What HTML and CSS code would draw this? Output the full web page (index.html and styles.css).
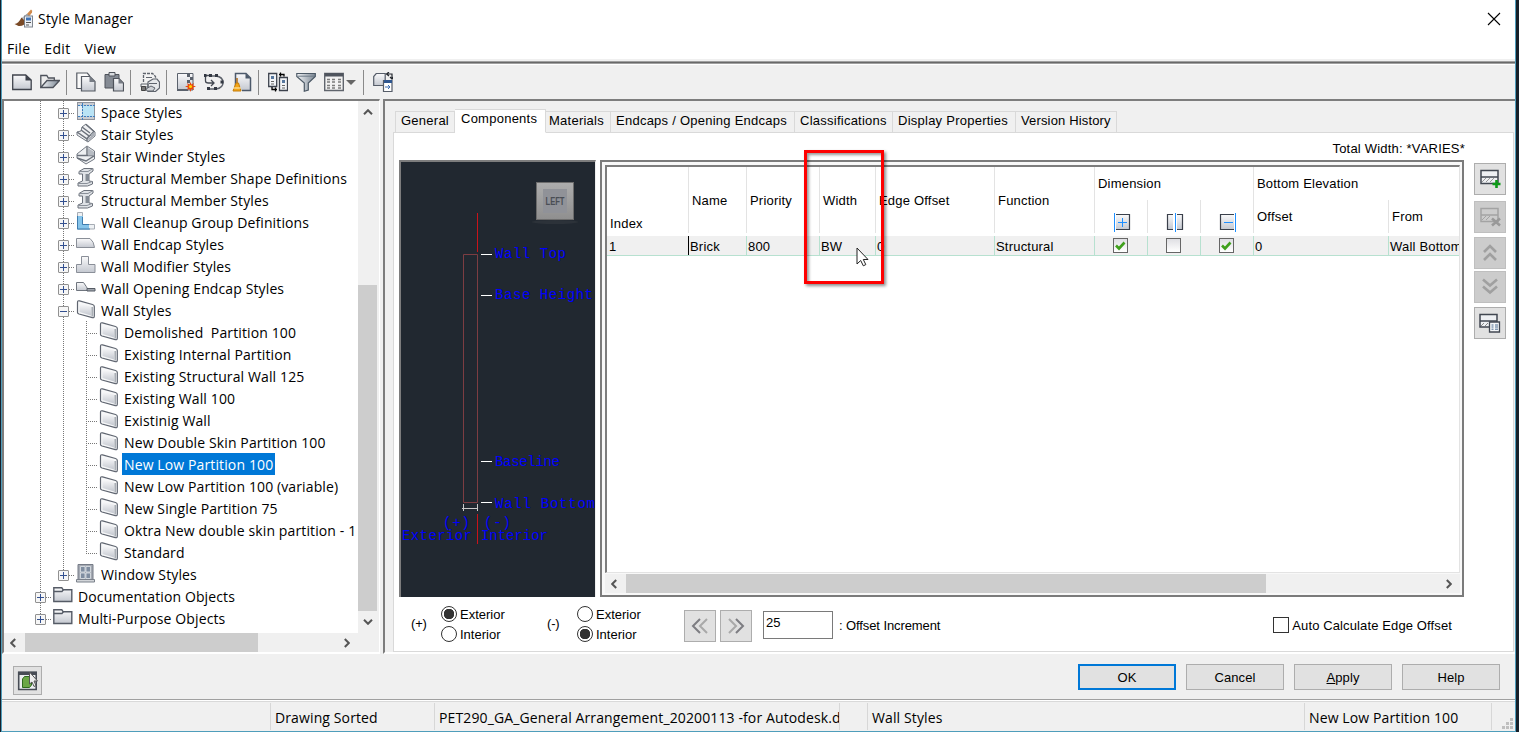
FILE: index.html
```html
<!DOCTYPE html>
<html lang="en">
<head>
    <meta charset="UTF-8">
    <title>Style Manager</title>
    <link rel="stylesheet" href="styles.css">
</head>
<body>
    <!-- Shared icons -->
    <svg class="defs" width="0" height="0">
        <defs>
            <linearGradient id="metal" x1="0" y1="0" x2="0" y2="1">
                <stop offset="0" stop-color="#fafafb"/>
                <stop offset="1" stop-color="#c4c8d0"/>
            </linearGradient>
            <linearGradient id="steel" x1="0" y1="0" x2="1" y2="0">
                <stop offset="0" stop-color="#f4f6f8"/>
                <stop offset="1" stop-color="#7b8794"/>
            </linearGradient>
        </defs>
        <symbol id="i-space" viewBox="0 0 20 20">
            <path d="M1 1h18v18H1z" fill="#c9ccd2"/>
            <path d="M1 5h5v10H1z" fill="#e6f0f7"/>
            <path d="M7 5h12v10H7z" fill="#b9e3f5"/>
            <path d="M1.500 1v18M18.500 1v18M1 1.500h18M1 18.500h18" stroke="#8f939c"/>
            <path d="M6.500 2v17M2 4.500h17M2 15.500h17" stroke="#3d7fc0" stroke-dasharray="2 1"/>
        </symbol>
        <symbol id="i-stair" viewBox="0 0 20 20">
            <path d="M1 9l4-1 1-4 4-3 9 8v4l-7 6L1 12z" fill="#f0f1f3" stroke="#737983"/>
            <path d="M1 9l10 7v2M5 7l8 6-2 3M6 4l8 6M10 1.500l8 7-3 3-2 2" stroke="#6b717b" stroke-width="1.500" fill="none"/>
            <path d="M12 18l6-5V9l-3 2.500v2l-2.500 1.500z" fill="#a9aeb6"/>
        </symbol>
        <symbol id="i-winder" viewBox="0 0 20 20">
            <path d="M1 9l10-8 7.500 5v8L10 19 1 13z" fill="#eef0f2" stroke="#737983"/>
            <path d="M1 10.500h17M1 13l9 3 8-5M11 2v8" stroke="#6b717b" fill="none" stroke-width="1.400"/>
            <path d="M12 3l6 4v3.500h-6z" fill="#b7bcc3"/>
        </symbol>
        <symbol id="i-beam" viewBox="0 0 20 20">
            <path d="M3 4.500L8 1.500h9V4l-4 3v7l3.500.500V17l-5 2H2v-3l4.500-2V7H3z" fill="#dfe2e6" stroke="#6b717b"/>
            <path d="M3 4.500h9l5-3M2 16.500h9l5-2M10 7v7" stroke="#8a9099" fill="none"/>
            <path d="M10 7h3v7h-3z" fill="#858c95"/>
        </symbol>
        <symbol id="i-cleanup" viewBox="0 0 20 20">
            <path d="M1.500 1.500h5v12h12v4.500h-17z" fill="#eef1f4" stroke="#a7adb5"/>
            <path d="M1 5h6v8h6v5.500H1z" fill="#86c4ea"/>
            <path d="M1.500 5v13H14M6.500 6v7.500H13" stroke="#3f7cae" fill="none"/>
        </symbol>
        <symbol id="i-endcap" viewBox="0 0 20 20">
            <path d="M.500 14.500v-9H14q4 3 4.500 9z" fill="url(#metal)" stroke="#8a8f98"/>
        </symbol>
        <symbol id="i-modifier" viewBox="0 0 20 20">
            <path d="M.500 17.500v-8h5v-8h7v8h6.500v8z" fill="url(#metal)" stroke="#8a8f98"/>
        </symbol>
        <symbol id="i-opening" viewBox="0 0 20 20">
            <path d="M.500 13.500v-8h7q3 4 5 8z" fill="url(#metal)" stroke="#6f757e"/>
            <path d="M11 11.500h8v2.500h-8z" fill="#a0a5ad" stroke="#555b64"/>
        </symbol>
        <symbol id="i-wall" viewBox="0 0 20 20">
            <path d="M1.500 3.500q0-2.200 2-1.600L16.500 5.500q1.800.500 1.800 2V17q0 2.200-2 1.600L3 15q-1.500-.500-1.500-1.500z" fill="#f6f7f8" stroke="#5f6570" stroke-width="1.200"/>
            <path d="M3.500 4.500L15 7.500v9L3.500 13z" fill="url(#metal)"/>
            <path d="M16.200 8v9.500" stroke="#a9aeb5" stroke-width="1.600"/>
        </symbol>
        <symbol id="i-window" viewBox="0 0 20 20">
            <path d="M2 16.500V1.500h15v15z" fill="#a4a9b2" stroke="#757b86"/>
            <path d="M4.500 3.500H9V9H4.500zM10 3.500h4.500V9H10zM4.500 10H9v5.500H4.500zM10 10h4.500v5.500H10z" fill="#7f8da0" stroke="#dfe4ea" stroke-width=".8"/>
            <path d="M.500 16.500h18V19H.500z" fill="#d2d5d9" stroke="#7b818b"/>
        </symbol>
        <symbol id="i-folder" viewBox="0 0 20 20">
            <path d="M.800 16.500V2.800h8l1.500 2h8.500v11.700z" fill="url(#metal)" stroke="#555b66" stroke-width="1.400"/>
            <path d="M1 6.500h8l1.500-2" stroke="#555b66" stroke-width="1.300" fill="none"/>
        </symbol>
    </svg>

    <div class="window">
        <div class="titlebar">
            <svg class="app-icon" viewBox="0 0 20 20" width="20" height="20">
                <path d="M12 6l5-5.500q2 1 1 3L14 9z" fill="#d08a4c"/>
                <path d="M7 10l6-5 3 3-4 6z" fill="#b9bec5" stroke="#8b9097" stroke-width=".5"/>
                <path d="M.500 15q4-.500 7-6.500l4 4q-1 5-7 4.500-2-1-4-2z" fill="#7a4a26"/>
                <rect x="10.500" y="7" width="8" height="11" fill="#eef1f5" stroke="#7e848d"/>
                <path d="M12 8.500h5v3h-5z" fill="#3f73b5"/>
                <path d="M12 13.500h5M12 16h3" stroke="#555"/>
            </svg>
            <span class="title">Style Manager</span>
            <svg class="close" viewBox="0 0 14 14" width="14" height="14"><path d="M1 1l12 12M13 1L1 13" stroke="#000" stroke-width="1.100"/></svg>
        </div>
        <div class="menubar">
            <span>File</span><span>Edit</span><span>View</span>
        </div>
        <div class="rule"></div>

        <div class="toolbar">
            <svg class="tool" viewBox="0 0 20 20">
                <path d="M.700 17.500V3h13l5.500 5v9.500z" fill="url(#metal)" stroke="#3f434c" stroke-width="1.300"/>
                <path d="M13.500 3l6 5.500h-6z" fill="#3f434c"/>
            </svg>
            <svg class="tool" viewBox="0 0 20 20">
                <path d="M.800 15.500V3.500h6l1.500 2.500h6v3" fill="#eee" stroke="#4d525b" stroke-width="1.300"/>
                <path d="M.800 15.500L7 8.500h12.500L13 15.500z" fill="url(#steel)" stroke="#4d525b" stroke-width="1.300"/>
            </svg>
            <span class="sep"></span>
            <svg class="tool" viewBox="0 0 20 20">
                <path d="M5 16.500H.800V1h10.500l2.500 3" fill="#fafafa" stroke="#555a63" stroke-width="1.200"/>
                <path d="M5.500 19v-14.500h8.500l5 5V19z" fill="url(#metal)" stroke="#555a63" stroke-width="1.200"/>
                <path d="M13.500 4.500v5.500h5.500z" fill="#777c85"/>
            </svg>
            <svg class="tool" viewBox="0 0 20 20">
                <path d="M1 2.500h14V16H1z" fill="#858b94" stroke="#4e535b"/>
                <path d="M5 .500h6V4H5z" fill="#d9dce0" stroke="#4e535b"/>
                <path d="M9.500 19V6.500h5.500l4.500 4.500v8z" fill="url(#metal)" stroke="#4e535b" stroke-width="1.200"/>
                <path d="M14.500 6.500v5h5z" fill="#777c85"/>
            </svg>
            <span class="sep"></span>
            <svg class="tool" viewBox="0 0 20 20">
                <path d="M3.500 10V1.500h9l3 3v3" fill="#f3f3f3" stroke="#5f646d" stroke-width="1.300" stroke-dasharray="3 1"/>
                <path d="M8 10l5-3h4l2.500 3v6l-4 3.500H8z" fill="#e6e8ea" stroke="#5f646d" stroke-width="1.200"/>
                <path d="M6 5.500h6M9 11.500h8M1 12h7v3H1z" fill="none" stroke="#5f646d"/>
                <path d="M1.500 14.500h4v4h-4z" fill="#777" stroke="#444"/>
                <path d="M6 17l5-3 4 2-2 3H7z" fill="#cfd2d6" stroke="#5f646d"/>
            </svg>
            <span class="sep"></span>
            <svg class="tool" viewBox="0 0 20 20">
                <path d="M1.500 18V1.500h15.500V18z" fill="url(#metal)" stroke="#5a616c"/>
                <path d="M11 2h3v3h3v3h-3v3h-3V8h3V5h-3zM1 17h11v2H1z" fill="#5a616c"/>
                <path d="M14.500 10l1 2.500 2.500-1.500-1 2.500 3 1-3 1 1 2.500-2.500-1-1 3-1-3-2.500 1 1-2.500-3-1 3-1-1-2.500 2.500 1.500z" fill="#e9460c"/>
                <circle cx="14.500" cy="14.500" r="1.600" fill="#ffd400"/>
            </svg>
            <svg class="tool" viewBox="0 0 20 20">
                <path d="M6 4h6q7 1 7 6.500T12 17H5" fill="none" stroke="#5c616a" stroke-width="1.500"/>
                <path d="M1 3.500h5M1.500 4v5q0 2 3 2h5M7 8l3 3-3 3" fill="none" stroke="#444952" stroke-width="1.300"/>
                <path d="M5 2h3v3H5zM11 2h3v3h-3zM3 15h3v3H3zM10 15h3v3h-3zM0 2h2.500v3H0zM16.500 8.500h3v3h-3z" fill="#333842"/>
            </svg>
            <svg class="tool" viewBox="0 0 20 20">
                <path d="M3.500 15V1.500H14l4.500 4.500v12.500H10" fill="url(#metal)" stroke="#4d5a6b" stroke-width="1.500"/>
                <path d="M13.500 1.500V6.500h5z" fill="#4d5a6b"/>
                <path d="M5 6v6" stroke="#b06a15" stroke-width="1.500"/>
                <path d="M4 11h2.500l2.500 8H1z" fill="#f3a516" stroke="#c47d0a"/>
                <path d="M1 16h8" stroke="#fff2c2"/>
            </svg>
            <span class="sep"></span>
            <svg class="tool" viewBox="0 0 20 20">
                <path d="M.700 1.500h8v13h-8zM11.500 5.500h8v13h-8z" fill="#f2f4f7" stroke="#3c424d" stroke-width="1.300"/>
                <path d="M3 4h3v3H3zM14 8h3v3h-3z" fill="#56779e"/>
                <path d="M3 9.500h3M3 12h3M14 13.500h3M14 16h3" stroke="#666"/>
                <path d="M11 2.500h5v2M12.500 .500v4M4 15v2.500h5M7.500 15.500v4" fill="none" stroke="#000" stroke-width="1.300"/>
            </svg>
            <svg class="tool" viewBox="0 0 20 20">
                <path d="M.800 1.500h18.500v3l-7 6.500v7l-4 1.200V11L.800 4.500z" fill="url(#steel)" stroke="#4c5966" stroke-width="1.200"/>
                <path d="M2 4.200h16" stroke="#6e7b88"/>
            </svg>
            <svg class="tool" viewBox="0 0 20 20">
                <path d="M.700 1.500h18.600v17H.700z" fill="#f2f2f2" stroke="#60656d" stroke-width="1.400"/>
                <path d="M1 1h18v3.500H1z" fill="#50555e"/>
                <path d="M3 7.500h3M8 7.500h3M14 7.500h3M3 10h3M8 10h3M14 10h3M3 13.500h3M8 13.500h3M14 13.500h3M3 16h3M8 16h3M14 16h3" stroke="#7c7c7c" stroke-width="1.300"/>
            </svg>
            <svg class="drop" viewBox="0 0 11 20"><path d="M1 8h10l-5 5z" fill="#666"/></svg>
            <span class="sep after-drop"></span>
            <svg class="tool" viewBox="0 0 20 20">
                <path d="M.700 13.500V4.500l2.500-3h9v12z" fill="url(#metal)" stroke="#565d69" stroke-width="1.200"/>
                <path d="M14 2h5v4M16 0l-2.500 2 2.500 2M17 5l2 2 1.500-2" fill="none" stroke="#23272e" stroke-width="1.200"/>
                <path d="M10.500 8.500h8.500v11h-8.500z" fill="#fff" stroke="#565d69" stroke-width="1.200"/>
                <path d="M11 8h8v3h-8z" fill="#2f568f"/>
                <path d="M12 15h5M15 13l2 2-2 2" fill="none" stroke="#3a6db3"/>
            </svg>
        </div>

        <div class="main">
            <div class="tree-pane">
                <div class="tree-row">
                    <ul class="tree" id="tree"></ul>
                    <div class="vscroll">
                        <svg viewBox="0 0 10 6" width="10" height="6"><path d="M1 5.200l4-4 4 4" /></svg>
                        <div class="vthumb"></div>
                        <svg viewBox="0 0 10 6" width="10" height="6"><path d="M1 .800l4 4 4-4" /></svg>
                    </div>
                </div>
                <div class="hscroll">
                    <svg viewBox="0 0 6 10" width="6" height="10"><path d="M5.200 1l-4 4 4 4" /></svg>
                    <div class="hthumb"></div>
                    <svg viewBox="0 0 6 10" width="6" height="10"><path d="M.800 1l4 4-4 4" /></svg>
                </div>
            </div>

            <div class="detail-pane">
                <div class="tabs">
                    <div class="tab t-general">General</div>
                    <div class="tab t-components active">Components</div>
                    <div class="tab t-materials">Materials</div>
                    <div class="tab t-endcaps">Endcaps / Opening Endcaps</div>
                    <div class="tab t-class">Classifications</div>
                    <div class="tab t-display">Display Properties</div>
                    <div class="tab t-version">Version History</div>
                </div>
                <div class="tab-body">
                    <div class="total">Total Width: *VARIES*</div>
                    <div class="work">
                        <div class="preview">
                            <svg viewBox="401 162 194 435" width="194" height="435">
                                <defs>
                                    <linearGradient id="cube" x1="0" y1="0" x2="0" y2="1">
                                        <stop offset="0" stop-color="#adadad"/>
                                        <stop offset="1" stop-color="#8f8f8f"/>
                                    </linearGradient>
                                </defs>
                                <ellipse cx="555" cy="222" rx="23" ry="2" fill="#2c3239"/>
                                <rect x="536.500" y="182.500" width="37" height="37" fill="url(#cube)" stroke="#6c6c6c"/>
                                <rect x="543" y="189" width="24" height="24" fill="#909298"/>
                                <text x="545.500" y="205" class="cube-label" textLength="19" lengthAdjust="spacingAndGlyphs">LEFT</text>
                                <path d="M477.500 213v39M477.500 514v30" stroke="#c9131a"/>
                                <path d="M463.500 502.500v-248h14v248z" fill="none" stroke="#7d3d42"/>
                                <path d="M481 254.500h11M481 295.500h11M481 461.500h11M481 502.500h11" stroke="#fff"/>
                                <path d="M462 508.500h16M463.500 504v7M477.500 504v7" stroke="#c8c8c8"/>
                                <g class="cad">
                                    <text x="495" y="258" textLength="71">Wall Top</text>
                                    <text x="495" y="299" textLength="98">Base Height</text>
                                    <text x="495" y="466" textLength="65">Baseline</text>
                                    <text x="495" y="508" textLength="100">Wall Bottom</text>
                                    <text x="443" y="527" textLength="27">(+)</text>
                                    <text x="484" y="527" textLength="27">(-)</text>
                                    <text x="402" y="540" textLength="70">Exterior</text>
                                    <text x="481" y="540" textLength="67">Interior</text>
                                </g>
                            </svg>
                        </div>

                        <div class="grid-frame">
                            <div class="grid-box">
                                <div class="grid head">
                                    <div class="cell low">Index</div>
                                    <div class="cell mid">Name</div>
                                    <div class="cell mid">Priority</div>
                                    <div class="cell mid">Width</div>
                                    <div class="cell mid">Edge Offset</div>
                                    <div class="cell mid">Function</div>
                                    <div class="group dim">
                                        <div class="group-title">Dimension</div>
                                        <div class="subs">
                                            <div class="sub first icon"><svg viewBox="0 0 18 20"><path d="M3 1.500h13.500v15H3" fill="url(#metal)" stroke="#3a404b" stroke-width="1.200"/><path d="M1.500 0v19M5 9.500h9M9.500 5v9" stroke="#1e8fff"/></svg></div>
                                            <div class="sub icon"><svg viewBox="0 0 18 20"><path d="M7 1.500H1.500v15H7M11 1.500h5.500v15H11" fill="url(#metal)" stroke="#3a404b" stroke-width="1.200"/><path d="M9.500 0v19" stroke="#1e8fff"/></svg></div>
                                            <div class="sub icon"><svg viewBox="0 0 18 20"><path d="M15 1.500H1.500v15H15" fill="url(#metal)" stroke="#3a404b" stroke-width="1.200"/><path d="M16.500 0v19M5 9.500h9" stroke="#1e8fff"/></svg></div>
                                        </div>
                                    </div>
                                    <div class="group elev">
                                        <div class="group-title">Bottom Elevation</div>
                                        <div class="subs">
                                            <div class="sub first offset">Offset</div>
                                            <div class="sub">From</div>
                                        </div>
                                    </div>
                                </div>
                                <div class="grid row">
                                    <div class="cell">1</div>
                                    <div class="cell current">Brick</div>
                                    <div class="cell">800</div>
                                    <div class="cell">BW</div>
                                    <div class="cell">0</div>
                                    <div class="cell">Structural</div>
                                    <div class="cell check"><span class="box"><svg viewBox="0 0 11 11"><path d="M1 5.500l3 3L9.500 2.500" /></svg></span></div>
                                    <div class="cell check"><span class="box"></span></div>
                                    <div class="cell check"><span class="box"><svg viewBox="0 0 11 11"><path d="M1 5.500l3 3L9.500 2.500" /></svg></span></div>
                                    <div class="cell">0</div>
                                    <div class="cell">Wall Bottom</div>
                                </div>
                            </div>
                            <div class="hscroll wide">
                                <svg viewBox="0 0 6 10" width="6" height="10"><path d="M5.200 1l-4 4 4 4" /></svg>
                                <div class="hthumb"></div>
                                <svg viewBox="0 0 6 10" width="6" height="10"><path d="M.800 1l4 4-4 4" /></svg>
                            </div>
                        </div>

                        <div class="side-buttons">
                            <button class="side"><svg viewBox="0 0 22 20"><path d="M2 1.500h17v13H2z" fill="#eef0f3" stroke="#414751" stroke-width="1.500"/><path d="M2 8h17" stroke="#414751" stroke-width="1.500"/><path d="M3 13l4-4M7 13l4-4M11 13l4-4" stroke="#999"/><path d="M17.500 11v8M13.500 15h8" stroke="#0d9a18" stroke-width="2.600"/></svg></button>
                            <button class="side off"><svg viewBox="0 0 22 20"><path d="M2 1.500h17v13H2z" fill="#ccc" stroke="#a3a3a3" stroke-width="1.500"/><path d="M2 8h17" stroke="#a3a3a3" stroke-width="1.500"/><path d="M3 13l4-4M7 13l4-4" stroke="#a3a3a3"/><path d="M13 11.500l8 7M21 11.500l-8 7" stroke="#999" stroke-width="2.600"/></svg></button>
                            <button class="side off b3"><svg viewBox="0 0 22 20"><path d="M5 9l6-6 6 6M5 17l6-6 6 6" fill="none" stroke="#a0a0a0" stroke-width="2.600"/></svg></button>
                            <button class="side off b4"><svg viewBox="0 0 22 20"><path d="M4 2.500l7 6 7-6M4 9.500l7 6 7-6" fill="none" stroke="#a0a0a0" stroke-width="2.600"/></svg></button>
                            <button class="side b5"><svg viewBox="0 0 22 20"><path d="M1 1.500h17v12.500H1z" fill="#eef0f3" stroke="#414751" stroke-width="1.500"/><path d="M1 8h17" stroke="#414751" stroke-width="1.500"/><path d="M2 13l3-3M6 13l3-3" stroke="#888"/><path d="M10.500 9h10v10h-10z" fill="#f4f6f8" stroke="#414751" stroke-width="1.300"/><path d="M12.500 12h2M12.500 14h2M12.500 16.200h2M16 12h3M16 14h3M16 16.200h3" stroke="#4a6b8f"/></svg></button>
                        </div>
                    </div>

                    <div class="options">
                        <span class="sign">(+)</span>
                        <div class="radios">
                            <label><input type="radio" name="plus" checked>Exterior</label>
                            <label><input type="radio" name="plus">Interior</label>
                        </div>
                        <span class="sign minus">(-)</span>
                        <div class="radios">
                            <label><input type="radio" name="minus">Exterior</label>
                            <label><input type="radio" name="minus" checked>Interior</label>
                        </div>
                        <button class="step first"><svg viewBox="0 0 18 16"><path d="M9 1L2 8l7 7" stroke="#7d7d82"/><path d="M16 1L9 8l7 7" stroke="#a9a9a9"/></svg></button>
                        <button class="step"><svg viewBox="0 0 18 16"><path d="M2 1l7 7-7 7" stroke="#a9a9a9"/><path d="M9 1l7 7-7 7" stroke="#7d7d82"/></svg></button>
                        <input class="increment" type="text" value="25">
                        <span class="inc-label">: Offset Increment</span>
                        <label class="auto"><input type="checkbox">Auto Calculate Edge Offset</label>
                    </div>
                </div>
            </div>
        </div>

        <div class="footer">
            <button class="viewer">
                <svg viewBox="0 0 22 22" width="22" height="22">
                    <path d="M1.700 2.500h17.500v17H1.700z" fill="#eceef0" stroke="#474c55" stroke-width="1.600"/>
                    <path d="M1 1.500h19v3.500H1z" fill="#474c55"/>
                    <path d="M5.500 9l2-2.500h7V15l-2 2.500h-7z" fill="#6ba746" stroke="#2f6a1f"/>
                    <path d="M12.500 2v12l2.500-2 2 4.500 2-1-2-4.500h3.500z" fill="#eee" stroke="#555"/>
                </svg>
            </button>
            <div class="actions">
                <button class="btn default">OK</button>
                <button class="btn">Cancel</button>
                <button class="btn"><u>A</u>pply</button>
                <button class="btn">Help</button>
            </div>
        </div>

        <div class="statusbar">
            <div class="status s1"></div>
            <div class="status s2">Drawing Sorted</div>
            <div class="status s3">PET290_GA_General Arrangement_20200113 -for Autodesk.dwg</div>
            <div class="status s4"></div>
            <div class="status s5">Wall Styles</div>
            <div class="status s6">New Low Partition 100</div>
            <div class="status s7">
                <svg viewBox="0 0 12 12" width="12" height="12"><path d="M8 0h3v3H8zM4 4h3v3H4zM8 4h3v3H8zM0 8h3v3H0zM4 8h3v3H4zM8 8h3v3H8z" fill="#bfbfbf"/></svg>
            </div>
        </div>

        <div class="highlight"></div>
        <svg class="cursor" viewBox="0 0 13 20" width="13" height="20"><path d="M1 1v16l3.700-3.500 2.600 5.300 2.500-1.200-2.500-5.100h4.700z" fill="#fff" stroke="#222" stroke-width="1"/></svg>
    </div>

    <script>
        // [level, icon, label, flags]  o = open node, x = last child, s = selected
        const nodes = [
            [2, 'space', 'Space Styles', ''],
            [2, 'stair', 'Stair Styles', ''],
            [2, 'winder', 'Stair Winder Styles', ''],
            [2, 'beam', 'Structural Member Shape Definitions', ''],
            [2, 'beam', 'Structural Member Styles', ''],
            [2, 'cleanup', 'Wall Cleanup Group Definitions', ''],
            [2, 'endcap', 'Wall Endcap Styles', ''],
            [2, 'modifier', 'Wall Modifier Styles', ''],
            [2, 'opening', 'Wall Opening Endcap Styles', ''],
            [2, 'wall', 'Wall Styles', 'o'],
            [3, 'wall', 'Demolished\u00a0 Partition 100', ''],
            [3, 'wall', 'Existing Internal Partition', ''],
            [3, 'wall', 'Existing Structural Wall 125', ''],
            [3, 'wall', 'Existing Wall 100', ''],
            [3, 'wall', 'Existinig Wall', ''],
            [3, 'wall', 'New Double Skin Partition 100', ''],
            [3, 'wall', 'New Low Partition 100', 's'],
            [3, 'wall', 'New Low Partition 100 (variable)', ''],
            [3, 'wall', 'New Single Partition 75', ''],
            [3, 'wall', 'Oktra New double skin partition - 1', ''],
            [3, 'wall', 'Standard', 'x'],
            [2, 'window', 'Window Styles', 'x'],
            [1, 'folder', 'Documentation Objects', ''],
            [1, 'folder', 'Multi-Purpose Objects', 'x']
        ];

        document.getElementById('tree').innerHTML = nodes.map(([level, icon, label, flags]) => {
            let guides = '';
            for (let i = 1; i < level; i++) guides += '<span class="guide"></span>';
            const last = flags.includes('x') ? ' last' : '';
            const box = level < 3 ? `<span class="expander${flags.includes('o') ? ' open' : ''}"></span>` : '';
            return `<li>${guides}<span class="guide branch${last}">${box}</span>` +
                `<svg class="node-icon"><use href="#i-${icon}"></use></svg>` +
                `<span class="label${flags.includes('s') ? ' selected' : ''}">${label}</span></li>`;
        }).join('');
    </script>
</body>
</html>
```
FILE: styles.css
```css
* {
    box-sizing: border-box;
}
body {
    margin: 0;
    padding: 0 3px 0 1px;
    height: 732px;
    overflow: hidden;
    background-color: #16202a;
    font-family: "Liberation Sans", Arial, sans-serif;
    font-size: 13px;
    letter-spacing: 0.2px;
    color: #000;
}
button, input {
    font: inherit;
    letter-spacing: inherit;
    margin: 0;
    padding: 0;
}
.defs {
    position: absolute;
}
.window {
    position: relative;
    height: 732px;
    background-color: #f0f0f0;
    border: 1px solid #4f9dbb;
    border-top: none;
    display: flex;
    flex-direction: column;
}

/* title and menu */
.titlebar, .menubar, .tree, .statusbar {
    font-family: "Open Sans", "Segoe UI", sans-serif;
    font-size: 14px;
    letter-spacing: 0.12px;
}
.titlebar {
    height: 37px;
    background-color: #fff;
    display: flex;
    align-items: center;
    padding: 0 14px 0 12px;
}
.title {
    flex: 1;
    margin-left: 4px;
    letter-spacing: 0.2px;
}
.menubar {
    height: 22px;
    background-color: #fff;
    display: flex;
    align-items: center;
    gap: 14px;
    padding-left: 5px;
    letter-spacing: 0.3px;
}
.rule {
    height: 6px;
    background: linear-gradient(#f0f0f0 2px, #a0a0a0 2px, #a0a0a0 3px, #696969 3px, #696969 4px, #a0a0a0 4px, #a0a0a0 5px, #fff 5px);
}

/* toolbar */
.toolbar {
    height: 34px;
    display: flex;
    align-items: center;
    gap: 8px;
    padding-left: 10px;
}
.tool {
    width: 20px;
    height: 20px;
}
.sep {
    width: 1px;
    height: 25px;
    margin: 0 1px 0 -2px;
    background-color: #8a8a8a;
}
.sep.after-drop {
    margin-left: -1px;
}
.drop {
    width: 11px;
    height: 20px;
    margin-left: -7px;
}

/* panes */
.main {
    height: 555px;
    display: flex;
}
.tree-pane {
    width: 378px;
    border-left: 2px solid #7d7d7d;
    border-top: 2px solid #7d7d7d;
    border-bottom: 2px solid #fff;
    border-right: 1px solid #fff;
    margin-right: 3px;
}
.tree-row {
    display: flex;
    height: 532px;
}
.tree {
    list-style: none;
    margin: 0;
    padding: 0 0 0 25px;
    width: 354px;
    background-color: #fff;
    overflow: hidden;
}
.tree li {
    display: flex;
    height: 22px;
    white-space: nowrap;
}
.guide {
    width: 23px;
    height: 22px;
    flex: none;
    background: repeating-linear-gradient(#777 0 1px, transparent 1px 2px) 11px 0 / 1px 22px no-repeat;
}
.branch {
    padding: 7px 0 0 6px;
    background: repeating-linear-gradient(#777 0 1px, transparent 1px 2px) 11px 0 / 1px 22px no-repeat,
                repeating-linear-gradient(90deg, #777 0 1px, transparent 1px 2px) 11px 12px / 12px 1px no-repeat;
}
.branch.last {
    background-size: 1px 12px, 12px 1px;
}
.expander {
    display: block;
    width: 11px;
    height: 11px;
    border: 1px solid #919191;
    border-radius: 1px;
    background: linear-gradient(#33508f, #33508f) center / 7px 1px no-repeat,
                linear-gradient(#33508f, #33508f) center / 1px 7px no-repeat,
                #f6f6f6;
}
.expander.open {
    background: linear-gradient(#33508f, #33508f) center / 7px 1px no-repeat, #f6f6f6;
}
.node-icon {
    width: 20px;
    height: 20px;
    margin: 0 3px 0 1px;
    flex: none;
}
.label {
    height: 22px;
    line-height: 22px;
    padding: 1px 2px 0;
}
.label.selected {
    background-color: #0078d7;
    color: #fff;
}

/* scrollbars */
.vscroll {
    width: 20px;
    display: flex;
    flex-direction: column;
    align-items: center;
    background-color: #f0f0f0;
    padding: 8px 1px 8px 0;
}
.vthumb {
    width: 19px;
    height: 326px;
    margin: 170px 0 auto;
    background-color: #cdcdcd;
}
.vscroll path, .hscroll path {
    fill: none;
    stroke: #555;
    stroke-width: 2;
}
.hscroll {
    height: 19px;
    width: 354px;
    display: flex;
    align-items: center;
    background-color: #f0f0f0;
    padding: 0 8px 0 6px;
}
.hscroll .hthumb {
    width: 233px;
    height: 19px;
    margin: 0 auto 0 9px;
    background-color: #cdcdcd;
}

/* right pane */
.detail-pane {
    flex: 1;
    border-left: 2px solid #7d7d7d;
    border-top: 2px solid #7d7d7d;
    border-bottom: 2px solid #fff;
    padding: 8px 1px 0 8px;
}
.tabs {
    display: flex;
    align-items: flex-end;
    height: 24px;
    padding-left: 2px;
    margin-bottom: -1px;
    letter-spacing: 0.25px;
}
.tab {
    height: 22px;
    line-height: 18px;
    border: 1px solid #d9d9d9;
    border-left: none;
    padding-left: 6px;
    white-space: nowrap;
}
.tab.active {
    height: 24px;
    background-color: #fff;
    border-bottom-color: #fff;
}
.t-general { width: 60px; border-left: 1px solid #d9d9d9; padding-left: 5px; }
.t-components { width: 91px; }
.t-materials { width: 65px; padding-left: 3px; }
.t-endcaps { width: 184px; padding-left: 5px; }
.t-class { width: 98px; padding-left: 5px; }
.t-display { width: 123px; padding-left: 5px; }
.t-version { width: 101px; padding-left: 5px; letter-spacing: 0.15px; }
.tab-body {
    height: 520px;
    background-color: #fff;
    border: 1px solid #d9d9d9;
    padding-left: 5px;
}
.total {
    height: 27px;
    line-height: 31px;
    text-align: right;
    padding-right: 48px;
}
.work {
    display: flex;
    height: 437px;
}
.preview {
    width: 197px;
    height: 437px;
    background-color: #212830;
    border-left: 2px solid #7d7d7d;
    border-top: 2px solid #7d7d7d;
    border-right: 1px solid #eee;
}
.preview svg {
    display: block;
}
.cube-label {
    font: bold 10px "Liberation Sans", Arial, sans-serif;
    letter-spacing: 0;
    fill: #4a4e55;
}
.cad {
    font: 14px "Liberation Mono", monospace;
    letter-spacing: 0;
    fill: #0000ff;
}

/* component grid */
.grid-frame {
    width: 864px;
    height: 437px;
    margin-left: 4px;
    border: 2px solid #7b7b7b;
    padding: 3px 2px 0 3px;
    background-color: #f8f8f8;
}
.grid-box {
    height: 408px;
    width: 855px;
    background-color: #fff;
    border-left: 2px solid #7d7d7d;
    border-top: 2px solid #7d7d7d;
    border-right: 1px solid #e3e3e3;
    border-bottom: 1px solid #e3e3e3;
    overflow: hidden;
}
.grid {
    display: grid;
    grid-template-columns: 81px 58px 73px 56px 119px 100px 53px 53px 53px 135px 71px;
}
.head {
    height: 66px;
    margin-bottom: 3px;
}
.head .cell {
    border-left: 1px solid #e3e3e3;
    padding-left: 3px;
    white-space: nowrap;
}
.head .cell:first-child {
    border-left: none;
}
.head .mid {
    padding-top: 26px;
}
.head .low {
    padding-top: 49px;
}
.group {
    border-left: 1px solid #e3e3e3;
}
.group.dim {
    grid-column: span 3;
}
.group.elev {
    grid-column: span 2;
}
.group-title {
    height: 33px;
    padding: 9px 0 0 3px;
}
.subs {
    display: flex;
    height: 33px;
}
.sub {
    flex: none;
    width: 53px;
    border-left: 1px solid #e3e3e3;
    padding: 9px 0 0 3px;
}
.sub.first {
    width: 52px;
    border-left: none;
}
.sub.first.offset {
    width: 134px;
}
.sub.icon {
    padding: 13px 0 0 18px;
}
.sub.icon svg {
    display: block;
    width: 18px;
    height: 20px;
}
.row {
    height: 20px;
    background-color: #f0f0f0;
    border-bottom: 1px solid #b7e1d0;
}
.row .cell {
    border-left: 1px solid #b7e1d0;
    padding: 3px 0 0 1px;
    white-space: nowrap;
    overflow: hidden;
}
.row .cell:first-child {
    border-left: none;
    padding-left: 2px;
}
.row .current {
    border-left-color: #000;
}
.row .check {
    padding: 2px 0 0 18px;
}
.box {
    display: block;
    width: 15px;
    height: 15px;
    border: 1px solid #666;
    background: linear-gradient(#dfdfe3, #fff);
    padding: 1px;
}
.box svg {
    display: block;
    width: 11px;
    height: 11px;
}
.box path {
    fill: none;
    stroke: #3fa01c;
    stroke-width: 2.600;
}
.hscroll.wide {
    width: 855px;
    margin-top: 1px;
    height: 19px;
}
.hscroll.wide .hthumb {
    width: 640px;
}

/* side buttons */
.side-buttons {
    margin-left: 10px;
    padding-top: 3px;
    display: flex;
    flex-direction: column;
    gap: 6px;
}
.side {
    width: 32px;
    height: 32px;
    border: 1px solid #adadad;
    background-color: #e1e1e1;
    display: flex;
    align-items: center;
    justify-content: center;
}
.side.off {
    background-color: #ccc;
    border-color: #bfbfbf;
}
.side svg {
    width: 22px;
    height: 20px;
}
.side.b3 { margin-top: -2px; }
.side.b4 { margin-top: -4px; }
.side.b5 { margin-top: -2px; }

/* options under the preview */
.options {
    display: flex;
    height: 54px;
    padding: 7px 0 0 12px;
    letter-spacing: 0;
}
.sign {
    width: 30px;
    padding-top: 12px;
    letter-spacing: -0.2px;
}
.sign.minus {
    width: 30px;
    margin-left: 30px;
}
.radios {
    width: 76px;
}
.radios label {
    display: flex;
    align-items: center;
    height: 20px;
    gap: 3px;
}
.radios input {
    appearance: none;
    width: 16px;
    height: 16px;
    border: 1px solid #333;
    border-radius: 50%;
    background-color: #fff;
}
.radios input:checked {
    background: radial-gradient(circle, #333 0 5px, #fff 5.500px);
}
.step {
    width: 32px;
    height: 32px;
    margin: 6px 4px 0 0;
    border: 1px solid #adadad;
    background-color: #e1e1e1;
    display: flex;
    align-items: center;
    justify-content: center;
}
.step.first {
    margin-left: 31px;
}
.step svg {
    width: 18px;
    height: 16px;
    fill: none;
    stroke-width: 2;
}
.increment {
    width: 70px;
    height: 28px;
    margin: 7px 6px 0 7px;
    border: 1px solid #7a7a7a;
    padding: 0 0 5px 2px;
}
.inc-label {
    padding-top: 14px;
    letter-spacing: -0.1px;
}
.auto {
    margin-left: auto;
    margin-right: 61px;
    padding-top: 0;
    height: 42px;
    display: flex;
    align-items: center;
    gap: 3px;
    letter-spacing: 0.12px;
}
.auto input {
    appearance: none;
    width: 16px;
    height: 16px;
    border: 1px solid #333;
    background-color: #fff;
}

/* footer */
.footer {
    height: 45px;
    display: flex;
    justify-content: space-between;
    padding: 10px 15px 0 11px;
}
.viewer {
    width: 29px;
    height: 29px;
    margin-top: 2px;
    border: 1px solid #adadad;
    background-color: #e1e1e1;
    display: flex;
    align-items: center;
    justify-content: center;
}
.actions {
    display: flex;
    gap: 10px;
    letter-spacing: 0.1px;
}
.btn {
    width: 98px;
    height: 26px;
    border: 1px solid #adadad;
    background-color: #e1e1e1;
    color: #000;
}
.btn.default {
    border: 2px solid #0078d7;
}
.statusbar {
    height: 32px;
    border-top: 1px solid #a0a0a0;
    display: flex;
    padding-top: 1px;
    box-shadow: inset 0 1px #fff, inset 0 2px #d9d9d9;
}
.status {
    height: 27px;
    margin-top: 2px;
    line-height: 29px;
    border-left: 1px solid #d7d7d7;
    padding-left: 4px;
    white-space: nowrap;
    overflow: hidden;
}
.s1 { width: 268px; border-left: none; }
.s2 { width: 164px; }
.s3 { width: 405px; }
.s4 { width: 28px; border-right: none; }
.s5 { width: 437px; }
.s6 { width: 187px; }
.s7 { flex: 1; padding: 15px 0 0 10px; line-height: 0; }

/* marker and pointer over the grid */
.highlight {
    position: absolute;
    left: 802px;
    top: 150px;
    width: 80px;
    height: 134px;
    border: 3px solid #fe0000;
    box-shadow: 2px 2px 3px rgba(0, 0, 0, 0.45), inset 2px 2px 3px rgba(0, 0, 0, 0.4);
}
.cursor {
    position: absolute;
    left: 854px;
    top: 247px;
}
```
